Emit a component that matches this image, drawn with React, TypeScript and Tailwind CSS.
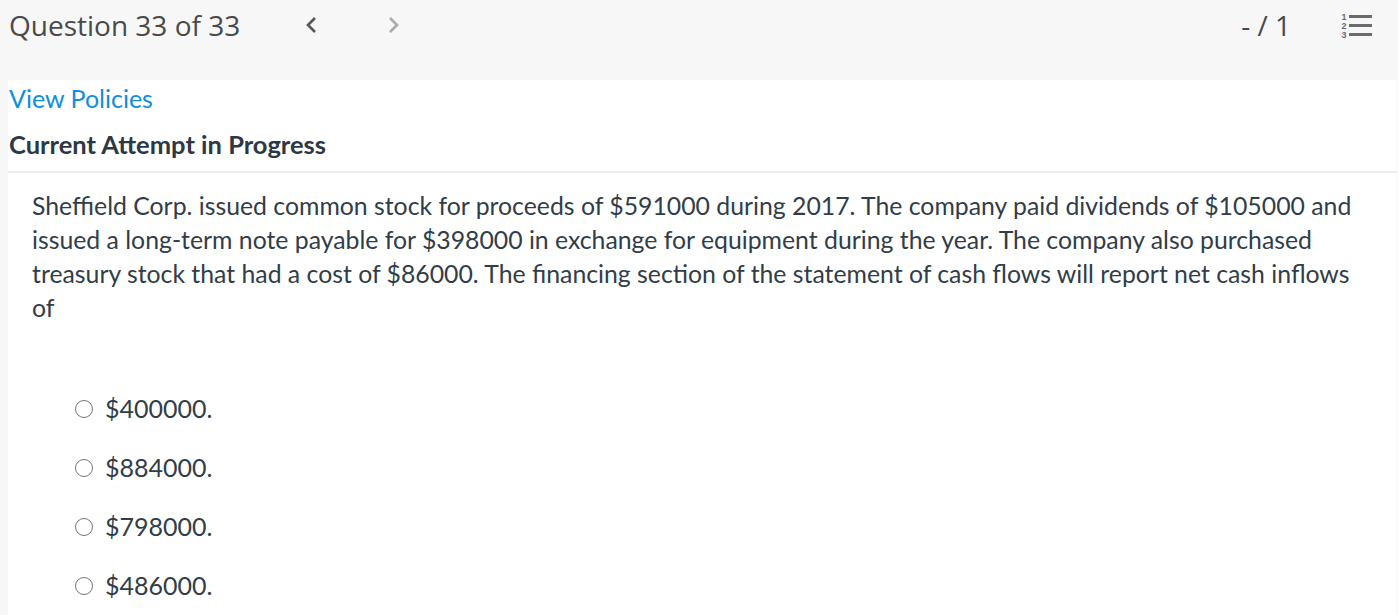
import React, { useState } from 'react';

const options = ['$400000.', '$884000.', '$798000.', '$486000.'];

const ListIcon: React.FC = () => (
  <svg width="32" height="26" viewBox="0 0 32 26" className="block">
    <text x="0.5" y="7.5" fontSize="9" fontWeight="bold" fill="#6b6b6b" fontFamily="Liberation Sans, sans-serif">1</text>
    <text x="0.5" y="16.5" fontSize="9" fontWeight="bold" fill="#6b6b6b" fontFamily="Liberation Sans, sans-serif">2</text>
    <text x="0.5" y="25.5" fontSize="9" fontWeight="bold" fill="#6b6b6b" fontFamily="Liberation Sans, sans-serif">3</text>
    <rect x="8" y="3" width="23" height="3" fill="#6b6b6b" />
    <rect x="8" y="12" width="23" height="3" fill="#6b6b6b" />
    <rect x="8" y="21" width="23" height="3" fill="#6b6b6b" />
  </svg>
);

export default function App() {
  const [picked, setPicked] = useState<number | null>(null);

  return (
    <div className="min-h-screen bg-[#f7f7f7] pl-2 pr-px" style={{ fontFamily: 'Lato, sans-serif' }}>
      {/* header bar */}
      <div className="h-[80px] flex items-start">
        <div className="h-[50px] w-full flex items-center pl-px pr-[24px]">
          <span className="text-[28px] text-[#4a4a4a]" style={{ fontFamily: '"Open Sans", sans-serif' }}>
            Question 33 of 33
          </span>
          <button className="ml-[62px] w-[20px] h-[30px] flex items-center justify-center">
            <svg width="14" height="18" viewBox="0 0 14 18">
              <path d="M10 2 L3 9 L10 16" stroke="#555" strokeWidth="2.6" fill="none" />
            </svg>
          </button>
          <button className="ml-[61px] w-[20px] h-[30px] flex items-center justify-center">
            <svg width="14" height="18" viewBox="0 0 14 18">
              <path d="M4 2 L11 9 L4 16" stroke="#ababab" strokeWidth="2.6" fill="none" />
            </svg>
          </button>
          <div className="ml-auto flex items-center">
            <span className="text-[28px] text-[#4a4a4a]" style={{ fontFamily: '"Open Sans", sans-serif' }}>
              - / 1
            </span>
            <div className="ml-[50px]">
              <ListIcon />
            </div>
          </div>
        </div>
      </div>

      {/* main panel */}
      <div className="bg-white min-h-[535px]">
        <div className="pl-px">
          <a className="block text-[25px] leading-[36px] text-[#0e8ee2]">View Policies</a>
          <h2 className="text-[25.5px] font-bold leading-[34px] text-[#2d3844] mt-[11px]">Current Attempt in Progress</h2>
        </div>
        <div className="h-[2px] bg-[#ececec] mt-[10px]" />
        <div className="px-6 pt-[16px]">
          <p className="text-[24.8px] leading-[34px] text-[#313d48]">
            Sheffield Corp. issued common stock for proceeds of $591000 during 2017. The company paid dividends of $105000 and issued a long-term note payable for $398000 in exchange for equipment during the year. The company also purchased treasury stock that had a cost of $86000. The financing section of the statement of cash flows will report net cash inflows of
          </p>
          <div className="mt-[67px] pl-[43px] flex flex-col gap-[25px]">
            {options.map((o, i) => (
              <label key={o} className="flex items-center h-[34px] cursor-pointer">
                <span
                  onClick={() => setPicked(i)}
                  className="w-[18px] h-[18px] rounded-full border border-[#767676] bg-white flex items-center justify-center"
                >
                  {picked === i && <span className="w-[10px] h-[10px] rounded-full bg-[#333]" />}
                </span>
                <span className="ml-[12px] text-[25px] text-[#313d48]">{o}</span>
              </label>
            ))}
          </div>
        </div>
      </div>
    </div>
  );
}
